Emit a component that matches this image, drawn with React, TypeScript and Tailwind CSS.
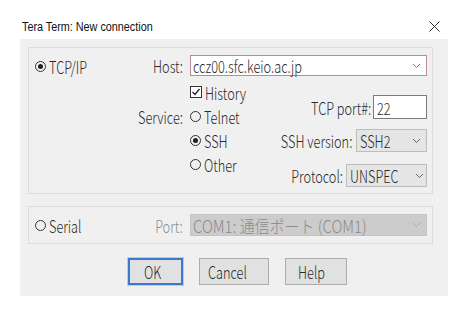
import React from 'react';

// condensed text: the dialog font is narrow and tall
const T: React.FC<{ children: React.ReactNode; right?: boolean; className?: string }> = ({
  children,
  right = false,
  className = '',
}) => (
  <span
    className={`inline-block whitespace-nowrap scale-x-[0.75] ${right ? 'origin-right' : 'origin-left'} ${className}`}
  >
    {children}
  </span>
);

const Radio: React.FC<{ checked?: boolean }> = ({ checked = false }) => (
  <span className="w-[11px] h-[11px] rounded-full border border-[#333] flex items-center justify-center shrink-0 bg-[#f0f0f0]">
    {checked && <span className="w-[5px] h-[5px] rounded-full bg-[#222]" />}
  </span>
);

const Check: React.FC = () => (
  <span className="w-[12px] h-[12px] border border-[#333] flex items-center justify-center shrink-0 bg-white">
    <svg width="10" height="10" viewBox="0 0 10 10" fill="none">
      <path d="M1.5 5 L4 7.5 L8.5 2" stroke="#222" strokeWidth="1.3" />
    </svg>
  </span>
);

const Chevron: React.FC<{ color?: string }> = ({ color = '#666' }) => (
  <svg width="9" height="6" viewBox="0 0 9 6" fill="none" className="shrink-0">
    <path d="M1 1 L4.5 4.5 L8 1" stroke={color} strokeWidth="1" />
  </svg>
);

export default function App() {
  return (
    <div
      className="w-[474px] h-[316px] bg-white text-[#2a2a2a] text-[17px] font-light leading-none overflow-hidden"
      style={{ fontFamily: '"Noto Sans CJK JP", "Noto Sans", sans-serif' }}
    >
      {/* title bar */}
      <div className="h-[39px] flex items-end pb-[6px] pl-[22px] pr-[34px] justify-between">
        <span
          className="text-[12px] font-normal text-[#111] inline-block scale-x-[0.9] origin-left whitespace-nowrap"
          style={{ fontFamily: '"Liberation Sans", Arial, sans-serif' }}
        >
          Tera Term: New connection
        </span>
        <svg width="11" height="11" viewBox="0 0 11 11" className="mb-[1px]">
          <path d="M0.5 0.5 L10.5 10.5 M10.5 0.5 L0.5 10.5" stroke="#333" strokeWidth="1" />
        </svg>
      </div>

      {/* dialog body */}
      <div className="ml-[20px] w-[428px] h-[257px] bg-[#f0f0f0] pt-[8px] pl-[8px]">
        {/* TCP/IP group */}
        <div className="w-[405px] h-[147px] border border-[#dcdcdc] pt-[7px] pl-[6px] pr-[5px]">
          <div className="flex items-center h-[21px]">
            <div className="w-[148px] shrink-0 flex items-center justify-between">
              <div className="flex items-center gap-[3px] pt-[1px]">
                <Radio checked />
                <T>TCP/IP</T>
              </div>
              <T right>Host:</T>
            </div>
            <div className="ml-[7px] w-[237px] h-[21px] shrink-0 bg-white border border-[#b8889f] flex items-center justify-between pl-[2px] pr-[5px]">
              <T>ccz00.sfc.keio.ac.jp</T>
              <Chevron color="#777" />
            </div>
          </div>

          <div className="flex mt-[4px]">
            <div className="w-[210px] shrink-0 flex flex-col">
              {[
                { label: '', ctl: <Check />, text: 'History' },
                { label: 'Service:', ctl: <Radio />, text: 'Telnet' },
                { label: '', ctl: <Radio checked />, text: 'SSH' },
                { label: '', ctl: <Radio />, text: 'Other' },
              ].map((r, i) => (
                <div key={i} className="flex items-center h-[24px]">
                  <div className="w-[148px] shrink-0 text-right">
                    {r.label && <T right>{r.label}</T>}
                  </div>
                  <div className="ml-[7px] shrink-0 flex items-center gap-[3px]">
                    {r.ctl}
                    <T>{r.text}</T>
                  </div>
                </div>
              ))}
            </div>

            <div className="flex-1 min-w-0 flex flex-col items-end">
              <div className="mt-[15px] flex items-center">
                <T right>TCP port#:</T>
                <div className="ml-[2px] w-[54px] h-[24px] shrink-0 bg-white border border-[#7a7a7a] flex items-center pl-[3px]">
                  <T>22</T>
                </div>
              </div>
              <div className="mt-[10px] flex items-center">
                <T right>SSH version:</T>
                <div className="ml-[4px] w-[71px] h-[23px] shrink-0 bg-[#e5e5e5] border border-[#bdbdbd] flex items-center justify-between pl-[3px] pr-[5px]">
                  <T>SSH2</T>
                  <Chevron />
                </div>
              </div>
              <div className="mt-[12px] flex items-center">
                <T right>Protocol:</T>
                <div className="ml-[3px] w-[81px] h-[23px] shrink-0 bg-[#e5e5e5] border border-[#bdbdbd] flex items-center justify-between pl-[3px] pr-[5px]">
                  <T>UNSPEC</T>
                  <Chevron />
                </div>
              </div>
            </div>
          </div>
        </div>

        {/* Serial group */}
        <div className="mt-[12px] w-[405px] h-[38px] border border-[#dcdcdc] flex items-center pl-[6px]">
          <div className="w-[148px] shrink-0 flex items-center justify-between">
            <div className="flex items-center gap-[3px]">
              <Radio />
              <T>Serial</T>
            </div>
            <T right className="text-[#8d8d8d]">Port:</T>
          </div>
          <div className="ml-[7px] w-[237px] h-[22px] shrink-0 bg-[#cccccc] border border-[#c4c4c4] flex items-center justify-between pl-[2px] pr-[5px] text-[#8a8a8a]">
            <span className="inline-block whitespace-nowrap scale-x-[0.88] origin-left">
              COM1: 通信ポート (COM1)
            </span>
            <Chevron color="#aaa" />
          </div>
        </div>

        {/* buttons */}
        <div className="mt-[14px] ml-[100px] flex gap-[16px]">
          <div className="w-[55px] h-[27px] bg-[#e1e1e1] border-2 border-[#3b78d0] ring-1 ring-[#f0b8c0] flex items-center justify-center">
            <T className="origin-center">OK</T>
          </div>
          <div className="w-[70px] h-[27px] bg-[#e1e1e1] border border-[#adadad] flex items-center justify-center">
            <T className="origin-center">Cancel</T>
          </div>
          <div className="w-[62px] h-[27px] bg-[#e1e1e1] border border-[#adadad] flex items-center justify-center">
            <T className="origin-center">Help</T>
          </div>
        </div>
      </div>
    </div>
  );
}
